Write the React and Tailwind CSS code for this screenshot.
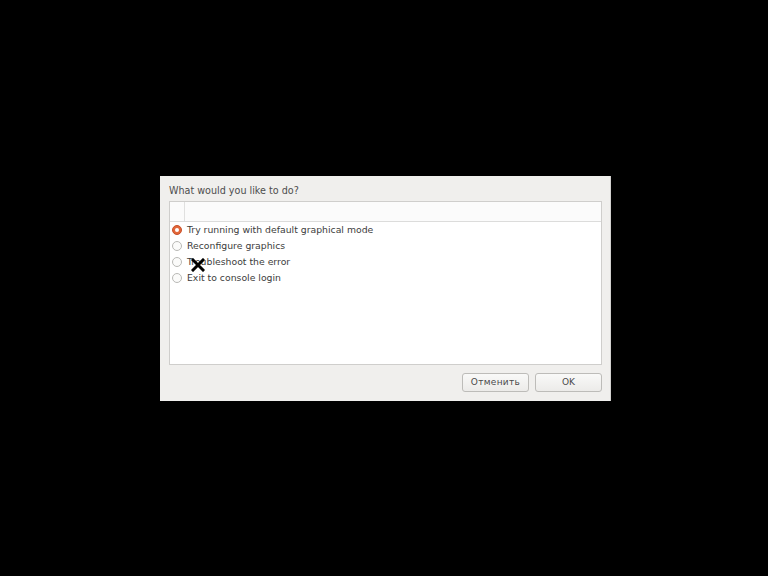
import React from "react";

const rows = [
  "Try running with default graphical mode",
  "Reconfigure graphics",
  "Troubleshoot the error",
  "Exit to console login",
];

function Radio({ checked }) {
  if (checked) {
    return (
      <span className="w-[10px] h-[10px] rounded-full bg-[#e2673a] border border-[#c9512a] flex items-center justify-center shrink-0">
        <span className="w-[4px] h-[4px] rounded-full bg-white" />
      </span>
    );
  }
  return (
    <span className="w-[10px] h-[10px] rounded-full bg-[#fbfbfa] border border-[#b9b9b6] shrink-0" />
  );
}

export default function App() {
  return (
    <div
      className="w-[768px] h-[576px] bg-black relative"
      style={{ fontFamily: '"DejaVu Sans", sans-serif' }}
    >
      <div className="absolute left-[160px] top-[176px] w-[451px] h-[225px] bg-[#f0efed] border-r border-[#d2d1cf] flex flex-col pl-[9px] pr-[8px]">
        <div className="h-[25px] flex items-end pb-[3px] text-[9.6px] text-[#4d4d4d]">
          What would you like to do?
        </div>
        <div className="h-[164px] bg-white border border-[#cfcecc] flex flex-col">
          <div className="h-[20px] flex bg-[#fbfbfb] border-b border-[#dcdcdb]">
            <div className="w-[15px] border-r border-[#e0e0df]" />
            <div className="flex-1" />
          </div>
          <div className="flex flex-col">
            {rows.map((r, i) => (
              <div key={r} className="h-[16px] flex items-center gap-[5px] pl-[2px] text-[9.3px] text-[#3c3c3c]">
                <Radio checked={i === 0} />
                <span>{r}</span>
              </div>
            ))}
          </div>
        </div>
        <div className="flex justify-end gap-[6px] mt-[8px]">
          <button className="w-[67px] h-[19px] rounded-[3px] border border-[#bdbcb9] bg-gradient-to-b from-[#f9f9f8] to-[#ecebe9] text-[9px] text-[#4a4a4a] tracking-[0.3px]">
            Отменить
          </button>
          <button className="w-[67px] h-[19px] rounded-[3px] border border-[#bdbcb9] bg-gradient-to-b from-[#f9f9f8] to-[#ecebe9] text-[9px] text-[#4a4a4a]">
            OK
          </button>
        </div>
      </div>
      <svg className="absolute left-[191px] top-[258px]" width="14" height="14" viewBox="0 0 14 14">
        <path d="M2 2 L12 12 M12 2 L2 12" stroke="#000" strokeWidth="3" strokeLinecap="square" />
      </svg>
    </div>
  );
}
